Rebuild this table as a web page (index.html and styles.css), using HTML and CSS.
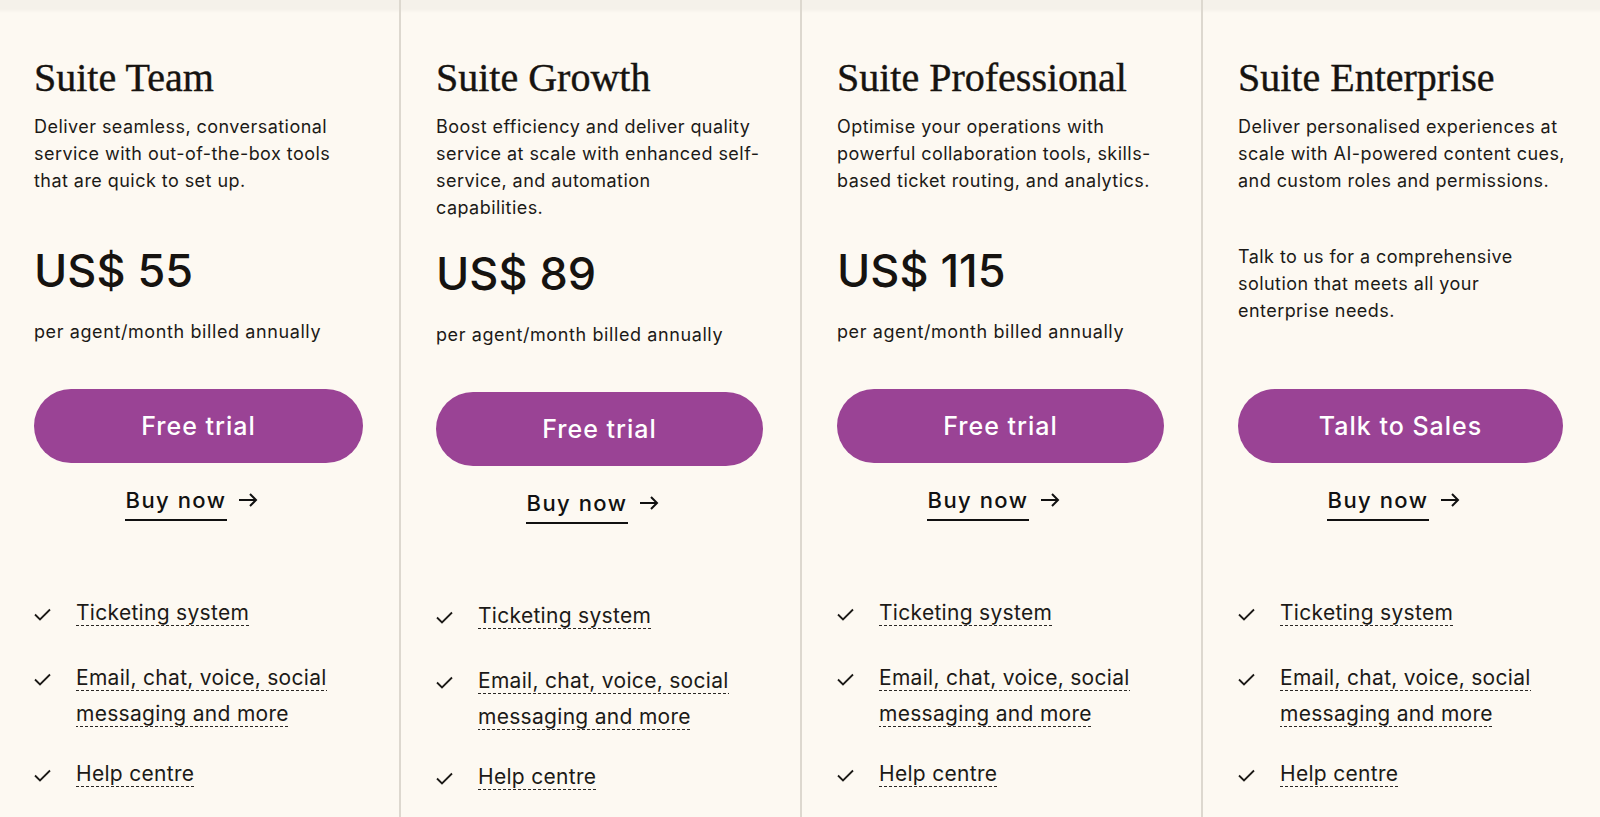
FILE: index.html
```html
<!DOCTYPE html>
<html lang="en">
<head>
<meta charset="utf-8">
<title>Zendesk Suite plans</title>
<link rel="stylesheet" href="styles.css">
</head>
<body>
<main class="plans">
  <section class="plan">
    <h2 class="plan-title">Suite Team</h2>
    <p class="plan-desc">Deliver seamless, conversational<br>service with out-of-the-box tools<br>that are quick to set up.</p>
    <div class="plan-price">
      <p class="price">US$ 55</p>
      <p class="price-note">per agent/month billed annually</p>
    </div>
    <a class="btn-primary" href="#">Free trial</a>
    <a class="buy-link" href="#"><span class="buy-text">Buy now</span><svg class="arrow" width="20" height="14" viewBox="0 0 20 14"><path d="M1 7h17M12 1l6 6-6 6" fill="none" stroke="#111" stroke-width="2"/></svg></a>
    <ul class="features">
      <li><svg class="check" width="17" height="13" viewBox="0 0 17 13"><path d="M1 6.5l5 5L16 1.5" fill="none" stroke="#1c1a17" stroke-width="1.8"/></svg><span class="feature-label"><span class="dashed">Ticketing system</span></span></li>
      <li><svg class="check" width="17" height="13" viewBox="0 0 17 13"><path d="M1 6.5l5 5L16 1.5" fill="none" stroke="#1c1a17" stroke-width="1.8"/></svg><span class="feature-label"><span class="dashed">Email, chat, voice, social messaging and more</span></span></li>
      <li><svg class="check" width="17" height="13" viewBox="0 0 17 13"><path d="M1 6.5l5 5L16 1.5" fill="none" stroke="#1c1a17" stroke-width="1.8"/></svg><span class="feature-label"><span class="dashed">Help centre</span></span></li>
    </ul>
  </section>

  <section class="plan">
    <h2 class="plan-title">Suite Growth</h2>
    <p class="plan-desc">Boost efficiency and deliver quality<br>service at scale with enhanced self-<br>service, and automation<br>capabilities.</p>
    <div class="plan-price">
      <p class="price">US$ 89</p>
      <p class="price-note">per agent/month billed annually</p>
    </div>
    <a class="btn-primary" href="#">Free trial</a>
    <a class="buy-link" href="#"><span class="buy-text">Buy now</span><svg class="arrow" width="20" height="14" viewBox="0 0 20 14"><path d="M1 7h17M12 1l6 6-6 6" fill="none" stroke="#111" stroke-width="2"/></svg></a>
    <ul class="features">
      <li><svg class="check" width="17" height="13" viewBox="0 0 17 13"><path d="M1 6.5l5 5L16 1.5" fill="none" stroke="#1c1a17" stroke-width="1.8"/></svg><span class="feature-label"><span class="dashed">Ticketing system</span></span></li>
      <li><svg class="check" width="17" height="13" viewBox="0 0 17 13"><path d="M1 6.5l5 5L16 1.5" fill="none" stroke="#1c1a17" stroke-width="1.8"/></svg><span class="feature-label"><span class="dashed">Email, chat, voice, social messaging and more</span></span></li>
      <li><svg class="check" width="17" height="13" viewBox="0 0 17 13"><path d="M1 6.5l5 5L16 1.5" fill="none" stroke="#1c1a17" stroke-width="1.8"/></svg><span class="feature-label"><span class="dashed">Help centre</span></span></li>
    </ul>
  </section>

  <section class="plan">
    <h2 class="plan-title">Suite Professional</h2>
    <p class="plan-desc">Optimise your operations with<br>powerful collaboration tools, skills-<br>based ticket routing, and analytics.</p>
    <div class="plan-price">
      <p class="price">US$ 115</p>
      <p class="price-note">per agent/month billed annually</p>
    </div>
    <a class="btn-primary" href="#">Free trial</a>
    <a class="buy-link" href="#"><span class="buy-text">Buy now</span><svg class="arrow" width="20" height="14" viewBox="0 0 20 14"><path d="M1 7h17M12 1l6 6-6 6" fill="none" stroke="#111" stroke-width="2"/></svg></a>
    <ul class="features">
      <li><svg class="check" width="17" height="13" viewBox="0 0 17 13"><path d="M1 6.5l5 5L16 1.5" fill="none" stroke="#1c1a17" stroke-width="1.8"/></svg><span class="feature-label"><span class="dashed">Ticketing system</span></span></li>
      <li><svg class="check" width="17" height="13" viewBox="0 0 17 13"><path d="M1 6.5l5 5L16 1.5" fill="none" stroke="#1c1a17" stroke-width="1.8"/></svg><span class="feature-label"><span class="dashed">Email, chat, voice, social messaging and more</span></span></li>
      <li><svg class="check" width="17" height="13" viewBox="0 0 17 13"><path d="M1 6.5l5 5L16 1.5" fill="none" stroke="#1c1a17" stroke-width="1.8"/></svg><span class="feature-label"><span class="dashed">Help centre</span></span></li>
    </ul>
  </section>

  <section class="plan">
    <h2 class="plan-title">Suite Enterprise</h2>
    <p class="plan-desc">Deliver personalised experiences at<br>scale with AI-powered content cues,<br>and custom roles and permissions.</p>
    <div class="plan-price">
      <p class="price-talk">Talk to us for a comprehensive solution that meets all your enterprise needs.</p>
    </div>
    <a class="btn-primary" href="#">Talk to Sales</a>
    <a class="buy-link" href="#"><span class="buy-text">Buy now</span><svg class="arrow" width="20" height="14" viewBox="0 0 20 14"><path d="M1 7h17M12 1l6 6-6 6" fill="none" stroke="#111" stroke-width="2"/></svg></a>
    <ul class="features">
      <li><svg class="check" width="17" height="13" viewBox="0 0 17 13"><path d="M1 6.5l5 5L16 1.5" fill="none" stroke="#1c1a17" stroke-width="1.8"/></svg><span class="feature-label"><span class="dashed">Ticketing system</span></span></li>
      <li><svg class="check" width="17" height="13" viewBox="0 0 17 13"><path d="M1 6.5l5 5L16 1.5" fill="none" stroke="#1c1a17" stroke-width="1.8"/></svg><span class="feature-label"><span class="dashed">Email, chat, voice, social messaging and more</span></span></li>
      <li><svg class="check" width="17" height="13" viewBox="0 0 17 13"><path d="M1 6.5l5 5L16 1.5" fill="none" stroke="#1c1a17" stroke-width="1.8"/></svg><span class="feature-label"><span class="dashed">Help centre</span></span></li>
    </ul>
  </section>
</main>
</body>
</html>
```

FILE: styles.css
```css
* { box-sizing: border-box; }

html, body {
  margin: 0;
  padding: 0;
}

body {
  background: #fdf9f2;
  color: #1c1a17;
  font-family: Inter, "Liberation Sans", sans-serif;
  overflow: hidden;
}

.plans {
  display: grid;
  grid-template-columns: 399px 401px 401px 1fr;
  min-height: 817px;
  background: linear-gradient(#f5f1ea 0, #f5f1ea 9px, #fdf9f2 13px);
}

.plan {
  padding: 55px 37px 0 35px;
  border-left: 2px solid #ddd8cf;
}

.plan:first-child {
  border-left: none;
  padding-left: 34px;
  padding-right: 36px;
}

.plan-title {
  margin: 0;
  font-family: "Liberation Serif", "Times New Roman", serif;
  font-weight: 400;
  font-size: 40px;
  line-height: 46px;
  color: #161310;
  -webkit-text-stroke: 0.4px #161310;
}

.plan-desc {
  margin: 12px -12px 0 0;
  font-size: 18px;
  line-height: 27px;
  letter-spacing: 0.45px;
  white-space: nowrap;
  min-height: 105px;
}

.plan-price {
  margin-top: 25px;
  min-height: 102px;
}

.price {
  margin: 0;
  font-size: 45px;
  line-height: 55px;
  font-weight: 500;
  color: #161310;
}

.price-note {
  margin: 20px 0 0;
  font-size: 18px;
  line-height: 27px;
  letter-spacing: 0.6px;
}

.price-talk {
  margin: 0;
  font-size: 18px;
  line-height: 27px;
  letter-spacing: 0.45px;
}

.btn-primary {
  display: flex;
  align-items: center;
  justify-content: center;
  height: 74px;
  margin-top: 44px;
  border-radius: 37px;
  background: #9a4395;
  color: #fff;
  font-size: 25px;
  font-weight: 500;
  letter-spacing: 1px;
  text-decoration: none;
}

.buy-link {
  display: flex;
  justify-content: center;
  align-items: flex-start;
  gap: 11px;
  margin-top: 22px;
  color: #111;
  text-decoration: none;
  font-size: 22px;
  line-height: 30px;
  font-weight: 500;
  letter-spacing: 1.5px;
}

.buy-text {
  padding-bottom: 4px;
  border-bottom: 2px solid #111;
}

.arrow {
  margin-top: 8px;
  margin-right: 14px;
  flex-shrink: 0;
}

.features {
  list-style: none;
  margin: 74px 0 0;
  padding: 0;
  display: flex;
  flex-direction: column;
  gap: 24px;
}

.features li {
  display: flex;
  align-items: flex-start;
  font-size: 21px;
  line-height: 36px;
  letter-spacing: 0.3px;
}

.features li:first-child {
  margin-bottom: 5px;
}

.check {
  flex-shrink: 0;
  margin-top: 13px;
  margin-right: 25px;
}

.dashed {
  padding-bottom: 1px;
  background-image: linear-gradient(to right, #2a2724 60%, transparent 60%);
  background-size: 5px 1px;
  background-repeat: repeat-x;
  background-position: 0 100%;
}
```
